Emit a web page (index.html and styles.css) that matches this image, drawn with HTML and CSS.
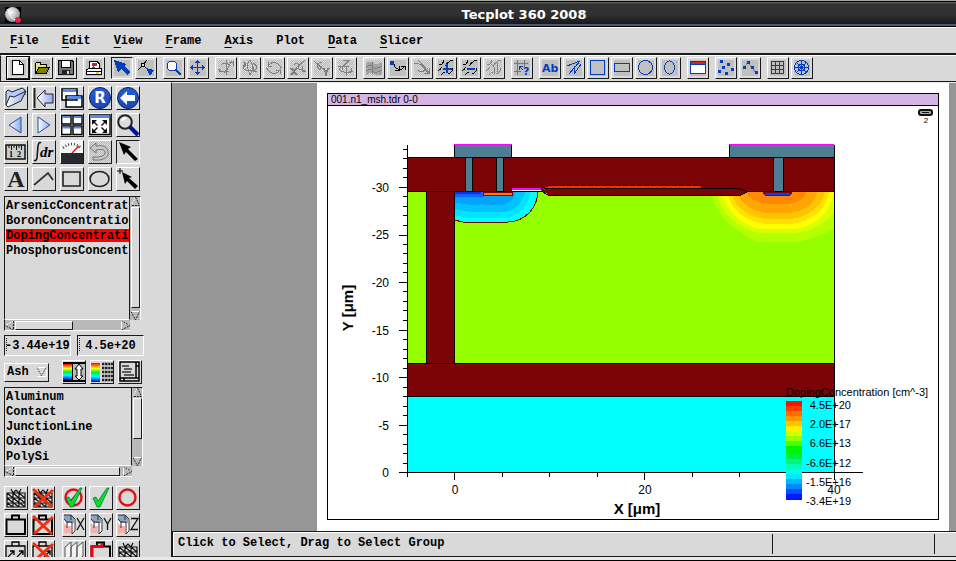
FILE: index.html
```html
<!DOCTYPE html>
<html lang="en">
<head>
<meta charset="utf-8">
<title>Tecplot 360 2008</title>
<link rel="stylesheet" href="styles.css">
</head>
<body>
<svg class="defs" aria-hidden="true">
  <defs>
    <radialGradient id="ball" cx=".4" cy=".35" r=".7"><stop offset="0" stop-color="#fff"/><stop offset="1" stop-color="#888"/></radialGradient>
    <linearGradient id="ice" x1="0" x2="1"><stop offset="0" stop-color="#fff"/><stop offset="1" stop-color="#8aaaf0"/></linearGradient>
    <linearGradient id="disc" x1="0" y1="0" x2="0" y2="1"><stop offset="0" stop-color="#1f5fe0"/><stop offset="1" stop-color="#1846b8"/></linearGradient>
    <linearGradient id="rainbow" x1="0" y1="0" x2="0" y2="1"><stop offset="0" stop-color="#f00"/><stop offset=".28" stop-color="#ff0"/><stop offset=".5" stop-color="#0e3"/><stop offset=".7" stop-color="#0ff"/><stop offset="1" stop-color="#00f"/></linearGradient>
    <symbol id="up" viewBox="0 0 9 9"><path d="M4.500 0L0 8.500" stroke="#fff" stroke-dasharray="2 1"/><path d="M4.500 0L8.500 8.500H0" fill="none" stroke="#222" stroke-dasharray="2 1"/></symbol>
    <symbol id="down" viewBox="0 0 9 9"><path d="M0 .5H9" stroke="#fff"/><path d="M0 .5L4.500 9L8.500 .5" fill="none" stroke="#222" stroke-dasharray="2 1"/></symbol>
    <symbol id="left" viewBox="0 0 9 9"><path d="M8.500 0L0 4.500" stroke="#fff" stroke-dasharray="2 1"/><path d="M8.500 0V9L0 4.500" fill="none" stroke="#222"  stroke-dasharray="2 1"/></symbol>
    <symbol id="right" viewBox="0 0 9 9"><path d="M9 4.500L.5 0V9" fill="none" stroke="#fff"/><path d="M.5 9L9 4.500L.5 0" fill="none" stroke="#222" stroke-dasharray="2 1"/></symbol>
    <symbol id="stream" viewBox="0 0 16 16"><path d="M1 5q4 0 5-5M0 11q3-2 4-4M7 6q3-5 8-6M3 15q1-2 4-3M10 14q4-1 5-6" fill="none" stroke="currentColor"/></symbol>
    <symbol id="mesh" viewBox="0 0 22 22"><path d="M2 6H20V20H2zM8 6V20M14 6V20M2 11H20M2 16H20M2 6L8 11M8 6L14 11M14 6L20 11M2 11L14 20M8 11L20 20M2 16L8 20M14 11L20 16M6 2L8 6L11 3L14 6L16 2" fill="none" stroke="#111" stroke-width="1.200"/></symbol>
    <symbol id="cross" viewBox="0 0 22 22"><path d="M1 2L20 20M21 3L2 20" stroke="#ef3010" stroke-width="3"/></symbol>
    <symbol id="case" viewBox="0 0 22 22"><path d="M1.500 5.500H20V20H1.500zM7 5V1.500H14V5" fill="none" stroke="#000" stroke-width="2"/></symbol>
    <symbol id="tick" viewBox="0 0 22 22"><path d="M3 11L6 10L8 14L17 1L19 1L10 20H7z" fill="#0be020" stroke="#065" stroke-width=".7"/></symbol>
    <symbol id="slab" viewBox="0 0 22 22"><path d="M1 1H8L12 5V19H5L1 15z" fill="#fff"/><path d="M1 1H8L11 4V9H4L1 6z" fill="#8ba2c0"/><path d="M1 9L4 12H8V19H1z" fill="#f6b1ae"/><path d="M1 1H8L12 5V17L9 20V8H4L1 5M4 8V14M8 1V6" fill="none" stroke="#333"/></symbol>
  </defs>
</svg>

<header class="titlebar">
  <svg class="logo" viewBox="0 0 16 16" aria-hidden="true"><rect width="16" height="16"/><circle cx="7.500" cy="7.500" r="7.500" fill="url(#ball)"/><path d="M3 2Q4 11 12 14" fill="none" stroke="#fff"/><circle cx="13" cy="13" r="3" fill="#dc2744"/></svg>
  <h1>Tecplot 360 2008</h1>
</header>

<nav class="menubar" aria-label="Main menu">
  <button><u>F</u>ile</button><button><u>E</u>dit</button><button><u>V</u>iew</button><button><u>F</u>rame</button><button><u>A</u>xis</button><button>Plot</button><button><u>D</u>ata</button><button><u>S</u>licer</button>
</nav>

<div class="toolbar" role="toolbar" aria-label="Tools">
  <div class="group">
    <button class="focus" aria-label="New"><svg viewBox="0 0 16 16"><path d="M2.500 .5H9.500L13.500 4.500V14.500H2.500z" fill="#fff" stroke="#000"/><path d="M9.500 .5V4.500H13" fill="none" stroke="#000"/></svg></button>
    <button aria-label="Open"><svg viewBox="0 0 16 16"><path d="M1.500 12V3.500L3 2.500H6L7 4.500H12.500V7" fill="#e4e47c" stroke="#000"/><path d="M1.500 13.500L5 7.500H15.500L12 13.500z" fill="#808000" stroke="#000"/></svg></button>
    <button aria-label="Save"><svg viewBox="0 0 16 16"><path d="M.5 .5H14L15.500 2V14.500H.5z" fill="#777" stroke="#000"/><path d="M3.500 .5H12.500V7.500H3.500z" fill="#fff" stroke="#000"/><path d="M4 10H12V14.500H4z" fill="#222"/><path d="M9 11H11V14H9z" fill="#ddd"/></svg></button>
  </div>
  <div class="group">
    <button aria-label="Print"><svg viewBox="0 0 16 16"><path d="M3.500 1.500H11L13.500 4V9H3.500z" fill="#fff" stroke="#000"/><path d="M6 3H11V6H6z" fill="#c02030"/><path d="M5 8L8 5L9 8z" fill="#8030c0"/><path d="M.5 9.500L3 8.500H15.500V14.500H.5z" fill="#fff" stroke="#000"/><path d="M1 11.500H15" stroke="#000"/><path d="M10 13H13" stroke="#e8cc20" stroke-width="2"/></svg></button>
  </div>
  <div class="group">
    <button class="pressed" aria-label="Select"><svg viewBox="0 0 16 16"><path d="M0 0L12 4L10 6L16 12L13 15L7 9L4 12z" fill="#0040bf"/></svg></button>
    <button aria-label="Adjust"><svg viewBox="0 0 16 16"><path d="M0 10L4 6M6 4L9 0M6 6L13 13" fill="none" stroke="#000"/><rect x="3.500" y="3.500" width="3" height="3" fill="#ddd" stroke="#000"/><path d="M8 8L16 10L12 16z" fill="#0040bf"/></svg></button>
  </div>
  <div class="group">
    <button aria-label="Zoom"><svg viewBox="0 0 16 16"><circle cx="6" cy="6" r="5" fill="#fff" stroke="#0040bf"/><path d="M9.500 9.500L15 15" stroke="#0040bf" stroke-width="2.400"/></svg></button>
    <button aria-label="Translate"><svg viewBox="0 0 16 16"><path d="M7.500 1V14M1 7.500H14" stroke="#0040bf"/><path d="M7.500 0L10.500 3H4.500zM7.500 15L10.500 12H4.500zM0 7.500L3 4.500V10.500zM15 7.500L12 4.500V10.500z" fill="#0040bf"/></svg></button>
  </div>
  <div class="group">
    <button disabled aria-label="Spherical rotate"><svg viewBox="0 0 16 16"><path d="M8 0V15M0 9q7 6 10-1t4-6M3 5q4-4 8 0M1 11q6 2 10 0M11 3L15 2L15 6" /></svg></button>
    <button disabled aria-label="Roll"><svg viewBox="0 0 16 16"><path d="M8 0q-5 4 0 15M8 0q5 7 0 15M3 4Q-1 8 4 10H13M11 3q6 3 2 7M1 2L4 4L2 7M11 7v4h4"/></svg></button>
    <button disabled aria-label="Twist"><svg viewBox="0 0 16 16"><path d="M2 2V6H6M2 6Q7 0 12 4T14 9M14 14V10H10M14 10Q9 16 4 12T2 8"/></svg></button>
    <button disabled aria-label="Rotate X"><svg viewBox="0 0 16 16"><path d="M1 8L7 15M7 8L1 15" stroke-width="2"/><path d="M5 9L15 0M8 5q-1 6 7 5M12 6v5h4M4 5q2-3 5 0"/></svg></button>
    <button disabled aria-label="Rotate Y"><svg viewBox="0 0 16 16"><path d="M0 1L10 10M8 2q-7 1-3 7M3 7L6 10L8 6"/><path d="M9 8L12 12L15 8M12 12V16" stroke-width="2"/></svg></button>
    <button disabled aria-label="Rotate Z"><svg viewBox="0 0 16 16"><path d="M5 .5H11L5 6.500H11M8 7V16M3 6Q-1 11 6 12H13L14 8M0 6H4V10M11 11L15 12"/></svg></button>
  </div>
  <div class="group">
    <button disabled aria-label="Slice"><svg viewBox="0 0 16 16"><path class="solid" d="M0 3q5-3 7 0t9-1v12q-6 3-8 0t-8 1z"/><path d="M0 7q5-3 7 0t9-1M0 11q5-3 7 0t9-1M6 2v12"/></svg></button>
    <button aria-label="Streamtrace"><svg viewBox="0 0 16 16"><rect width="4" height="4" y="1" fill="#0040bf"/><path d="M4 4Q5 9 8 9T12 9L15 6M5 10H9V6M11 6h4v4" fill="none" stroke="#000"/></svg></button>
    <button disabled aria-label="Streamtrace end"><svg viewBox="0 0 16 16"><path d="M0 4Q5 2 9 7T15 13M4 0L15 12M3 10Q8 14 14 8M10 13h5V8"/></svg></button>
    <button aria-label="Add streamtrace"><svg viewBox="0 0 16 16"><use href="#stream"/><path d="M9 4V13M5 9H14" stroke="#0040bf" stroke-width="2"/></svg></button>
    <button aria-label="Remove streamtrace"><svg viewBox="0 0 16 16"><use href="#stream"/><path d="M5 9H13" stroke="#0040bf" stroke-width="2"/></svg></button>
    <button disabled aria-label="Edit streamtrace"><svg viewBox="0 0 16 16"><use href="#stream"/><path d="M5 4L8 7V14M11 3V12"/></svg></button>
  </div>
  <div class="group">
    <button aria-label="Probe"><svg viewBox="0 0 16 16"><path d="M3.500 0V15M10.500 0V7M0 3.500H14M0 11.500H7" stroke="#777"/><path d="M5 6L9 10M5 10V6H9" fill="none" stroke="#0040bf"/><text x="9" y="15" class="glyph">?</text></svg></button>
  </div>
  <div class="group">
    <button aria-label="Text"><svg viewBox="0 0 16 16"><text x="0" y="12" class="glyph">Ab</text></svg></button>
    <button aria-label="Polyline"><svg viewBox="0 0 16 16" class="blue"><path d="M1 6L14 1L3 14M8 6V14L15 4"/></svg></button>
    <button aria-label="Square"><svg viewBox="0 0 16 16" class="blue"><path d="M.5 .5H14.500V14.500H.5z"/></svg></button>
    <button aria-label="Rectangle"><svg viewBox="0 0 16 16" class="blue"><path d="M.5 3.500H15.500V11.500H.5z"/></svg></button>
    <button aria-label="Circle"><svg viewBox="0 0 16 16" class="blue"><circle cx="7.500" cy="7.500" r="7"/></svg></button>
    <button aria-label="Ellipse"><svg viewBox="0 0 16 16" class="blue"><path d="M7.500 .5Q2.500 3 2.500 7.500T7.500 14.500Q12.500 12 12.500 7.500T7.500 .5z"/></svg></button>
  </div>
  <div class="group">
    <button aria-label="Frame"><svg viewBox="0 0 16 16"><path d="M.5 1.500H15.500V13.500H.5z" fill="#fff" stroke="#0040bf"/><path d="M1 2H15V4H1z" fill="#e02010"/><path d="M1 4.500H15" stroke="#0040bf"/></svg></button>
  </div>
  <div class="group">
    <button aria-label="Extract points"><svg viewBox="0 0 16 16"><path d="M2 0h3v3H2zM9 3h3v3H9zM4 6h3v3H4zM0 10h3v3H0zM7 12h3v3H7zM13 8h3v3h-3z" fill="#0040bf"/></svg></button>
    <button aria-label="Extract polyline"><svg viewBox="0 0 16 16"><path d="M2 8L6 2L10 8L14 13" fill="none" stroke="#888"/><path d="M5 1h3v3H5zM1 6h3v3H1zM9 6h3v3H9zM13 11h3v3h-3z" fill="#0040bf"/></svg></button>
  </div>
  <div class="group">
    <button aria-label="Rectangular zone"><svg viewBox="0 0 16 16" class="blue"><path d="M1.500 1.500H13.500V13.500H1.500zM5.500 1V14M9.500 1V14M1 5.500H14M1 9.500H14"/></svg></button>
    <button aria-label="Circular zone"><svg viewBox="0 0 16 16" class="blue"><circle cx="7.500" cy="7.500" r="7"/><circle cx="7.500" cy="7.500" r="3.500"/><path d="M7.500 0V15M0 7.500H15M2.500 2.500L12.500 12.500M12.500 2.500L2.500 12.500"/></svg></button>
  </div>
</div>

<main>
  <aside class="sidebar">
    <div class="tools">
      <button aria-label="Load"><svg viewBox="0 0 22 22"><path d="M1 18V5L3 3L7 5L17 1L20 3V8" fill="#b8ccf8" stroke="#222"/><path d="M1 18L5 9L9 10L21 4L16 14L3 20z" fill="url(#ice)" stroke="#222"/></svg></button>
      <button aria-label="First"><svg viewBox="0 0 22 22"><path d="M1.500 1V21" stroke="#222" stroke-width="2"/><path d="M4 11L12 3V7H20V16H12V20z" fill="url(#ice)" stroke="#222"/></svg></button>
      <button aria-label="Cascade"><svg viewBox="0 0 22 22"><path d="M1 2H16V13H1zM5 9H21V20H5z" fill="#fff" stroke="#000" stroke-width="1.500"/><path d="M2 2H15V5H2zM6 9H20V12H6z" fill="#5a88e8"/></svg></button>
      <button aria-label="Redraw"><svg viewBox="0 0 22 22"><circle cx="11" cy="11" r="10.500" fill="url(#disc)" stroke="#124"/><text x="11" y="16" class="r-letter">R</text></svg></button>
      <button aria-label="Back"><svg viewBox="0 0 22 22"><circle cx="11" cy="11" r="10.500" fill="url(#disc)" stroke="#124"/><path d="M3 11L10 4V8H18V14H10V18z" fill="#fff"/></svg></button>

      <button aria-label="Previous"><svg viewBox="0 0 22 22"><path d="M4 11L16 3V19z" fill="url(#ice)" stroke="#2450a0"/></svg></button>
      <button aria-label="Next"><svg viewBox="0 0 22 22"><path d="M17 11L5 3V19z" fill="url(#ice)" stroke="#2450a0"/></svg></button>
      <button aria-label="Tile"><svg viewBox="0 0 22 22"><path d="M.7 1.500H10V10H.7zM12 1.500H21V10H12zM.7 12H10V20.500H.7zM12 12H21V20.500H12z" fill="#fff" stroke="#000" stroke-width="1.400"/><path d="M1 2H9V4H1zM13 2H20V4H13zM1 12.500H9V14.500H1zM13 12.500H20V14.500H13z" fill="#5a88e8"/></svg></button>
      <button aria-label="Fit"><svg viewBox="0 0 22 22"><path d="M.7 1H21V20.500H.7z" fill="#fff" stroke="#000" stroke-width="1.400"/><path d="M1 1H20.500V4H1z" fill="#5a88e8"/><path d="M3 6H8L6 8L9 11L8 12L5 9L3 11zM18 6H13L15 8L12 11L13 12L16 9L18 11zM3 19H8L6 17L9 14L8 13L5 16L3 14zM18 19H13L15 17L12 14L13 13L16 16L18 14z" fill="#111"/></svg></button>
      <button aria-label="Magnify"><svg viewBox="0 0 22 22"><circle cx="8" cy="8" r="6.800" fill="#ddd" stroke="#222" stroke-width="2"/><path d="M5 7Q6 4 9 4" fill="none" stroke="#fff" stroke-width="2"/><path d="M13 13L21 21" stroke="#001090" stroke-width="4"/></svg></button>

      <button aria-label="Ruler"><svg viewBox="0 0 22 22"><path d="M1 4H20V18H1z" fill="#ccc" stroke="#111" stroke-width="1.500"/><path d="M4 4v3M6.500 4v5M9 4v3M11.500 4v5M14 4v3M16.500 4v5" stroke="#111"/><text x="4" y="16" class="digits">1</text><text x="12" y="16" class="digits">2</text></svg></button>
      <button aria-label="Integrate"><svg viewBox="0 0 22 22"><path d="M8 2Q6 0 5 5L4 17Q3 21 1 19" fill="none" stroke="#111" stroke-width="1.500"/><text x="7" y="16" class="italic">dr</text></svg></button>
      <button aria-label="Gauge"><svg viewBox="0 0 22 22"><rect width="22" height="13" fill="#f4f4f4"/><rect y="12" width="22" height="10" fill="#262a30"/><path d="M2 7Q11-1 20 7" fill="none" stroke="#444" stroke-dasharray="1 2" stroke-width="2.500"/><path d="M11 12L18 5" stroke="#d01818" stroke-width="1.500"/></svg></button>
      <button disabled aria-label="Undo"><svg viewBox="0 0 22 22"><path d="M7 2L1 7L7 12V9Q15 7 16 11T9 16H4V19H11Q21 17 19 10T7 5z" fill="#c8c8c8" stroke="#777"/></svg></button>
      <button class="pressed" aria-label="Pointer"><svg viewBox="0 0 22 22"><path d="M2 1L14 6L11 8L21 18L18 20L9 11L7 14z" fill="#000"/></svg></button>

      <button aria-label="Label"><svg viewBox="0 0 22 22"><text x="11" y="19" class="serif-a">A</text></svg></button>
      <button aria-label="Line"><svg viewBox="0 0 22 22"><path d="M1 17L15 5L20 12" fill="none" stroke="#333" stroke-width="1.800"/></svg></button>
      <button aria-label="Box"><svg viewBox="0 0 22 22"><path d="M2 4H19V18H2z" fill="none" stroke="#222" stroke-width="1.600"/></svg></button>
      <button aria-label="Oval"><svg viewBox="0 0 22 22"><ellipse cx="10.500" cy="11" rx="9.500" ry="7.500" fill="none" stroke="#222" stroke-width="1.600"/></svg></button>
      <button aria-label="Add point"><svg viewBox="0 0 22 22"><path d="M3 0V6M0 3H6" stroke="#000"/><path d="M5 4L15 9L12 10L21 18L18 21L10 13L8 16z" fill="#000"/></svg></button>
    </div>

    <section class="listbox fields-list">
      <ul aria-label="Fields"><li>ArsenicConcentrat</li><li>BoronConcentratio</li><li class="selected">DopingConcentrati</li><li>PhosphorusConcent</li></ul>
      <div class="vbar"><svg><use href="#up"/></svg><i></i><svg><use href="#down"/></svg></div>
      <div class="hbar"><svg><use href="#left"/></svg><i></i><svg><use href="#right"/></svg></div>
    </section>

    <div class="range">
      <input aria-label="Minimum" value="-3.44e+19">
      <input aria-label="Maximum" value=" 4.5e+20">
    </div>

    <div class="palette">
      <div class="dropdown"><select aria-label="Scale"><option>Ash</option></select><svg viewBox="0 0 10 10"><path d="M0 .5H9M9.500 3V9.500H0" stroke="#fff" fill="none"/><path d="M0 .5L4.500 9L9 .5" fill="none" stroke="#222" stroke-dasharray="1 1"/></svg></div>
      <button aria-label="Range"><svg viewBox="0 0 22 22"><rect y="1" width="22" height="20"/><rect y="3" width="9" height="16" fill="url(#rainbow)"/><path d="M10 3H22V19H10z" fill="#bbb"/><path d="M16 3L20 8H18V15H20L16 19L12 15H14V8H12z" fill="#fff" stroke="#000"/></svg></button>
      <button aria-label="Legend"><svg viewBox="0 0 22 22"><rect y="2" width="9" height="19" fill="url(#rainbow)"/><path d="M11 3H22M11 7H22M11 11H22M11 15H22M11 19H22" stroke="#222" stroke-width="2.400" stroke-dasharray="2 .6 3 .6"/></svg></button>
      <button aria-label="Page"><svg viewBox="0 0 22 22"><path d="M1 1H20V20H1zM1 17H17V1M5 17V20M17 17H20M17 5H20" fill="none" stroke="#000" stroke-width="1.500"/><path d="M3 5H10M5 8H13M3 11H12M5 14H15" stroke="#333" stroke-width="1.300"/></svg></button>
    </div>

    <section class="listbox materials-list">
      <ul aria-label="Materials"><li>Aluminum</li><li>Contact</li><li>JunctionLine</li><li>Oxide</li><li>PolySi</li></ul>
      <div class="vbar"><svg><use href="#up"/></svg><i></i><svg><use href="#down"/></svg></div>
      <div class="hbar"><svg><use href="#left"/></svg><i></i><svg><use href="#right"/></svg></div>
    </section>

    <div class="actions">
      <button aria-label="Show mesh"><svg viewBox="0 0 22 22"><use href="#mesh"/></svg></button>
      <button aria-label="Hide mesh"><svg viewBox="0 0 22 22"><use href="#mesh"/><use href="#cross"/></svg></button>
      <button aria-label="Toggle"><svg viewBox="0 0 22 22"><circle cx="10.500" cy="10.500" r="8" fill="none" stroke="#e01018" stroke-width="2.400"/><path d="M5 17L16 5" stroke="#e01018" stroke-width="2"/><use href="#tick"/></svg></button>
      <button aria-label="Enable"><svg viewBox="0 0 22 22"><use href="#tick"/></svg></button>
      <button aria-label="Disable"><svg viewBox="0 0 22 22"><circle cx="10.500" cy="10.500" r="8" fill="none" stroke="#e01018" stroke-width="2.400"/></svg></button>

      <button aria-label="Show boundary"><svg viewBox="0 0 22 22"><use href="#case"/></svg></button>
      <button aria-label="Hide boundary"><svg viewBox="0 0 22 22"><use href="#case"/><use href="#cross"/></svg></button>
      <button aria-label="X slice"><svg viewBox="0 0 22 22"><use href="#slab"/><path d="M14 4L21 16M21 4L14 16" stroke="#111" stroke-width="1.300"/></svg></button>
      <button aria-label="Y slice"><svg viewBox="0 0 22 22"><use href="#slab"/><path d="M14 4L17.500 10L21 4M17.500 10V16" fill="none" stroke="#111" stroke-width="1.300"/></svg></button>
      <button aria-label="Z slice"><svg viewBox="0 0 22 22"><use href="#slab"/><path d="M14 4.500H21L14 15.500H21" fill="none" stroke="#111" stroke-width="1.300"/></svg></button>

      <button aria-label="Show vectors"><svg viewBox="0 0 22 22"><path d="M1 5H20V20H1zM7 5V1H14V5M3 16L9 10M5 10H9V14M12 16L18 10M14 10H18V14" fill="none" stroke="#000" stroke-width="1.300"/></svg></button>
      <button aria-label="Hide vectors"><svg viewBox="0 0 22 22"><path d="M1 5H20V20H1zM7 5V1H14V5M12 16L18 10M14 10H18V14" fill="none" stroke="#000" stroke-width="1.300"/><use href="#cross"/></svg></button>
      <button aria-label="Layers"><svg viewBox="0 0 22 22"><path d="M2 20V6L8 1V15zM8 20V6L14 1V15zM14 20V6L20 1V15z" fill="#f4f4f4" stroke="#555"/></svg></button>
      <button aria-label="Crop"><svg viewBox="0 0 22 22"><use href="#case"/><path d="M2 20V5.500H12V2" fill="none" stroke="#f00010" stroke-width="3"/></svg></button>
      <button aria-label="Mesh layer"><svg viewBox="0 0 22 22"><use href="#mesh"/></svg></button>
    </div>
  </aside>

  <section class="workspace">
    <div class="paper">
      <article class="frame">
        <h2>001.n1_msh.tdr 0-0</h2>
        <svg class="plot" viewBox="328 106 610 413" role="img" aria-label="DopingConcentration contour plot">
          <g shape-rendering="crispEdges">
            <rect x="407" y="191" width="427" height="173" fill="#95ff00"/>
            <rect x="407" y="396" width="427" height="76" fill="#00ffff"/>
            <path d="M711 191C714 215 735 231 757 242H797C810 240 825 234 834 229V191z" fill="#b5ff00"/>
            <path d="M717 191C719 214 738 227 758 233H796C815 231 826 222 834 213V191z" fill="#d8ff00"/>
            <path d="M722 191C725 214 745 226 761 229H796C817 225 831 212 834 191z" fill="#ffff00"/>
            <path d="M727 191C730 211 748 222 766 224H791C814 221 827 208 829 191z" fill="#ffe000"/>
            <path d="M731 191C734 208 750 217 766 219H791C811 216 823 205 825 191z" fill="#ffc400"/>
            <path d="M737 191C740 204 753 212 768 213H789C806 211 816 202 817 191z" fill="#ffa500"/>
            <path d="M745 191C749 198 757 204 769 204H787C798 203 804 199 807 191z" fill="#ff8800"/>
            <path d="M454 191H538C537 207 527 221 508 222H463L454 220z" fill="#00ffff"/>
            <path d="M454 191H531C529 206 520 216 506 218H468L454 215z" fill="#00e4ff"/>
            <path d="M454 191H526C523 203 515 211 504 212H470L454 209z" fill="#00c4ff"/>
            <path d="M454 191H516C514 200 507 205 500 205H472L454 203z" fill="#00a4ff"/>
            <rect x="454" y="192" width="29" height="5" fill="#1464ff"/>
            <rect x="454" y="191" width="27" height="3" fill="#0030ff"/>
            <path d="M538 192C537 207 527 221 508 222H463L454 220" fill="none" stroke="#7e0000"/>
            <path d="M407 157H834V191H748L740 195H549L541 190H512V191H407zM427 191H454V364H427zM407 363H834V396H407z" fill="#7c0406"/>
            <path d="M483 192H512V195H483z" fill="#ff7800" stroke="#7c0406"/>
            <path d="M541 190L549 187H701" fill="none" stroke="#ff2a00" stroke-width="2"/>
            <path d="M540 189L549 185.500H701" fill="none" stroke="#000" stroke-dasharray="5 2"/>
            <path d="M541 190L546 188.500H738L748 191.500L740 195.500H549L541 191" fill="none" stroke="#000"/>
            <path d="M763 192H792L790 195H765z" fill="#0040ff" stroke="#7c0406"/>
            <path d="M454 144H512V157H454zM465 157H473V191H465zM496 157H504V191H496zM729 144H834V157H729zM773 157H784V191H773z" fill="#4d7e92"/>
            <path d="M454.500 144V157M511.500 144V157M465.500 157V191M472.500 157V191M496.500 157V191M503.500 157V191M729.500 144V157M773.500 157V191M783.500 157V191M407 157.500H834M407 191.500H541M748 191.500H834M426.500 191V363M454.500 191V363M407 363.500H834M407 396.500H834" stroke="#000"/>
            <path d="M407.500 145V477M834.500 145V480M399 472.500H863" stroke="#000"/>
            <rect x="454" y="144" width="58" height="1" fill="#ff00ff"/>
            <rect x="729" y="144" width="105" height="1" fill="#ff00ff"/>
            <rect x="512" y="188" width="29" height="2" fill="#ff00ff"/>
            <path d="M399 187.500H407M399 235H407M399 282.500H407M399 330H407M399 377.500H407M399 425H407" stroke="#000"/>
            <path d="M403 149.500H407M403 158.500H407M403 168.500H407M403 177.500H407M403 196.500H407M403 206.500H407M403 215.500H407M403 225.500H407M403 244.500H407M403 253.500H407M403 263.500H407M403 272.500H407M403 291.500H407M403 301.500H407M403 310.500H407M403 320.500H407M403 339.500H407M403 349.500H407M403 358.500H407M403 368.500H407M403 387.500H407M403 396.500H407M403 406.500H407M403 415.500H407M403 434.500H407M403 444.500H407M403 453.500H407M403 463.500H407" stroke="#000"/>
            <path d="M454.500 472V480M644.500 472V480M502.500 472V477M549.500 472V477M597.500 472V477M692.500 472V477M739.500 472V477M787.500 472V477" stroke="#000"/>
            <rect x="786" y="401" width="16" height="99" fill="#0018ff"/>
            <g>
              <rect x="786" y="401" width="16" height="5" fill="#ff1000"/><rect x="786" y="406" width="16" height="5" fill="#ff3c00"/><rect x="786" y="411" width="16" height="5" fill="#ff6c00"/><rect x="786" y="416" width="16" height="5" fill="#ff9600"/><rect x="786" y="421" width="16" height="5" fill="#ffc400"/><rect x="786" y="426" width="16" height="5" fill="#fff000"/><rect x="786" y="431" width="16" height="5" fill="#d0ff00"/><rect x="786" y="436" width="16" height="5" fill="#95ff00"/><rect x="786" y="441" width="16" height="5" fill="#4cff00"/><rect x="786" y="446" width="16" height="8" fill="#00f400"/><rect x="786" y="454" width="16" height="5" fill="#00f040"/><rect x="786" y="459" width="16" height="5" fill="#00f880"/><rect x="786" y="464" width="16" height="5" fill="#00ffb8"/><rect x="786" y="469" width="16" height="5" fill="#00ffe8"/><rect x="786" y="474" width="16" height="5" fill="#00e8ff"/><rect x="786" y="479" width="16" height="5" fill="#00b8ff"/><rect x="786" y="484" width="16" height="5" fill="#0088ff"/><rect x="786" y="489" width="16" height="5" fill="#0050ff"/>
            </g>
          </g>
          <g class="ticks end"><text x="389" y="192">-30</text><text x="389" y="239">-25</text><text x="389" y="287">-20</text><text x="389" y="335">-15</text><text x="389" y="382">-10</text><text x="389" y="430">-5</text><text x="389" y="477">0</text></g>
          <g class="ticks middle"><text x="455" y="494">0</text><text x="645" y="494">20</text><text x="834" y="494">40</text></g>
          <text class="axis" x="637" y="514">X [μm]</text>
          <text class="axis" transform="translate(353 308) rotate(-90)">Y [μm]</text>
          <g class="legend"><text x="786" y="396">DopingConcentration [cm^-3]</text></g>
          <g class="legend end"><text x="851" y="409">4.5E+20</text><text x="851" y="428">2.0E+17</text><text x="851" y="447">6.6E+13</text><text x="851" y="467">-6.6E+12</text><text x="851" y="486">-1.5E+16</text><text x="851" y="505">-3.4E+19</text></g>
          <rect x="919" y="110" width="13" height="5" rx="2" fill="#aaa" stroke="#111" stroke-width="2"/><path d="M922 112.500H929" stroke="#111"/>
          <text class="badge" x="926" y="123">2</text>
        </svg>
      </article>
    </div>
  </section>

  <footer class="status"><p>Click to Select, Drag to Select Group</p><span></span><span></span></footer>
</main>
</body>
</html>
```
FILE: styles.css
```css
* { box-sizing: border-box; }

:root {
  --face: #d9d9d9;
  --trough: #b9b9b9;
  --dark: #1a1a1a;
  --blue: #0040bf;
}

body {
  margin: 0;
  height: 100vh;
  display: flex;
  flex-direction: column;
  overflow: hidden;
  background: var(--face);
  border-bottom: 1px solid #000;
  color: #000;
  font: bold 12px/15px "Liberation Mono", monospace;
}

.defs { position: absolute; width: 0; height: 0; }

button, input, select {
  margin: 0;
  padding: 0;
  font: inherit;
  color: inherit;
  background: var(--face);
  border: 0;
  border-radius: 0;
}

button svg { display: block; overflow: visible; }

.titlebar {
  flex: none;
  height: 27px;
  display: flex;
  align-items: center;
  padding: 2px 0 0 5px;
  background: linear-gradient(#a5a79f 0 1px, #000 1px 2px, #555a55 2px 3px, #333 4px, #303030 15px, #181818 24px, #4a5878 24px 26px, #000 26px);
}

.logo { width: 16px; height: 16px; }

.titlebar h1 {
  flex: 1;
  margin: 0;
  padding-left: 71px;
  text-align: center;
  color: #fff;
  font: bold 13px/20px "DejaVu Sans", sans-serif;
}

.menubar {
  flex: none;
  height: 28px;
  display: flex;
  align-items: center;
  gap: 23px;
  padding: 1px 0 0 10px;
  border-top: 1px solid #fff;
  border-bottom: 2px solid var(--dark);
}

.menubar u { text-underline-offset: 3px; }

.toolbar {
  flex: none;
  height: 27px;
  display: flex;
  align-items: flex-start;
  gap: 6px;
  padding: 1px 0 0 6px;
  border-top: 1px solid #fff;
  border-left: 1px solid var(--dark);
  border-bottom: 1px solid var(--dark);
}

.group { display: flex; gap: 2px; }

.toolbar button {
  width: 22px;
  height: 22px;
  padding: 2px;
}

.toolbar button, .tools button, .palette button, .actions button {
  border: 1px solid;
  border-color: #fff var(--dark) var(--dark) #fff;
}

.toolbar svg {
  width: 16px;
  height: 16px;
  background: #c0c0c0;
  shape-rendering: crispEdges;
}

.toolbar button.focus { outline: 1px solid #000; }

.toolbar button.pressed, .tools button.pressed { border-color: var(--dark) #fff #fff var(--dark); }

.toolbar button:disabled svg, .tools button:disabled svg {
  background: repeating-conic-gradient(#bbb 0 25%, #d9d9d9 0 50%) 0 0 / 2px 2px;
  color: #888;
}

.toolbar button:disabled path { fill: none; stroke: #808080; }

.toolbar button:disabled .solid { fill: #a4a4a4; stroke: none; }

.blue { fill: none; stroke: var(--blue); }

.glyph { font: bold 11px "DejaVu Sans", sans-serif; fill: var(--blue); }

main {
  flex: 1;
  min-height: 0;
  display: grid;
  grid-template: minmax(0, 1fr) 26px / 172px minmax(0, 1fr);
  border-bottom: 3px solid #e8e8e8;
}

.sidebar {
  grid-row: 1 / 3;
  display: flex;
  flex-direction: column;
  align-items: flex-start;
  overflow: hidden;
  padding: 3px 0 0 4px;
  border-top: 1px solid #fff;
  border-right: 1px solid var(--dark);
}

.sidebar > * { flex: none; }

.sidebar button { width: 24px; height: 24px; }

.sidebar button svg { width: 22px; height: 22px; }

.sidebar .actions svg { overflow: hidden; }

.tools {
  display: grid;
  grid-template-columns: repeat(5, 24px);
  gap: 3px 4px;
}

.r-letter { font: bold 15px "DejaVu Sans", sans-serif; fill: #fff; text-anchor: middle; }
.serif-a { font: bold 24px "Liberation Serif", serif; fill: #222; text-anchor: middle; }
.digits { font: bold 8px "Liberation Serif", serif; }
.italic { font: italic bold 15px "Liberation Serif", serif; }

.listbox {
  display: grid;
  grid-template-columns: 126px 11px;
  margin-top: 5px;
}

.listbox ul {
  margin: 0;
  padding: 2px 0 2px 1px;
  list-style: none;
  overflow: hidden;
  border: 1px solid;
  border-color: var(--dark) var(--dark) #fff var(--dark);
}

.listbox li { height: 15px; line-height: 15px; }

.listbox .selected { background: #f00; background-clip: content-box; padding-bottom: 2px; }

.fields-list ul { height: 124px; }

.materials-list { grid-template-columns: 128px 11px; margin-top: 3px; }

.materials-list ul { height: 79px; }

.vbar, .hbar { display: flex; background: var(--trough); gap: 1px; }

.vbar { flex-direction: column; align-items: center; border-top: 1px solid var(--dark); border-right: 1px solid #fff; }

.hbar { height: 11px; align-items: center; border-left: 1px solid var(--dark); border-bottom: 1px solid #fff; }

.vbar svg, .hbar svg { flex: none; width: 9px; height: 9px; }

.vbar svg:last-child { margin-top: auto; }

.hbar svg:last-child { margin-left: auto; }

.vbar i, .hbar i {
  background: var(--face);
  border: 1px solid;
  border-color: #fff var(--dark) var(--dark) #fff;
}

.vbar i { width: 9px; height: 82%; }

.hbar i { height: 9px; width: 46%; }

.materials-list .vbar i { height: 52%; }

.materials-list .hbar i { width: 83%; }

.range { display: flex; gap: 6px; margin-top: 4px; }

.range input {
  width: 67px;
  height: 21px;
  border: 1px solid;
  border-color: var(--dark) #fff #fff var(--dark);
  background: repeating-linear-gradient(var(--dark) 0 1px, transparent 1px 2px) 1px 2px / 1px 14px no-repeat var(--face);
}

.palette { display: flex; align-items: center; gap: 4px; margin-top: 4px; }

.dropdown { position: relative; margin-right: 9px; }

.dropdown select {
  appearance: none;
  display: block;
  width: 45px;
  height: 19px;
  padding-left: 2px;
  border: 1px solid;
  border-color: #fff var(--dark) var(--dark) #fff;
}

.dropdown svg { position: absolute; top: 4px; right: 2px; width: 10px; height: 10px; pointer-events: none; }

.actions {
  display: grid;
  grid-template-columns: 24px 28px 24px 24px 24px;
  gap: 3px;
  margin-top: 9px;
}

.workspace {
  display: flex;
  padding: 0 7px 0 145px;
  border-top: 1px solid #e8e8e8;
  background: #969696;
}

.paper {
  flex: 1;
  min-width: 0;
  display: flex;
  padding: 10px 10px 11px;
  background: #fff;
}

.frame {
  flex: 1;
  min-width: 0;
  display: flex;
  flex-direction: column;
  border: 1px solid #000;
}

.frame h2 {
  flex: none;
  margin: 0;
  height: 12px;
  padding-left: 3px;
  border-bottom: 1px solid #000;
  background: #d4b5e4;
  font: 10px/12px "Liberation Sans", sans-serif;
}

.plot { flex: 1; min-height: 0; width: 100%; }

.ticks { font: 12px "Liberation Sans", sans-serif; }
.legend { font: 11px "Liberation Sans", sans-serif; }
.axis { font: bold 15px "Liberation Sans", sans-serif; text-anchor: middle; }
.badge { font: 8px "Liberation Sans", sans-serif; text-anchor: middle; }
.end { text-anchor: end; }
.middle { text-anchor: middle; }

.status {
  display: grid;
  grid-template-columns: minmax(0, 1fr) 162px 22px;
  align-items: center;
  border: 1px solid var(--dark);
  border-right: 0;
  box-shadow: inset 1px 1px #fff;
}

.status p { margin: 0; padding: 0 0 2px 5px; }

.status span { height: 20px; border-left: 1px solid var(--dark); }
```
